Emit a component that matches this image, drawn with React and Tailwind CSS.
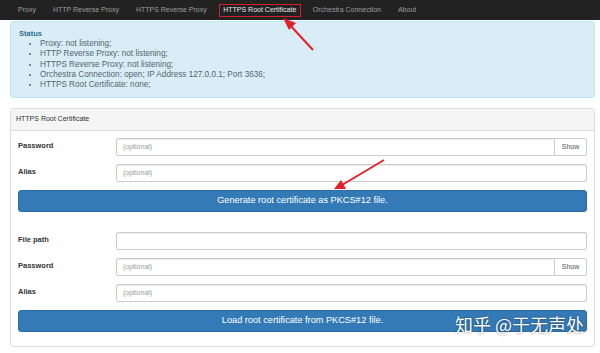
import React from "react";

const navItems = [
  "Proxy",
  "HTTP Reverse Proxy",
  "HTTPS Reverse Proxy",
  "HTTPS Root Certificate",
  "Orchestra Connection",
  "About",
];

const statusItems = [
  "Proxy: not listening;",
  "HTTP Reverse Proxy: not listening;",
  "HTTPS Reverse Proxy: not listening;",
  "Orchestra Connection: open; IP Address 127.0.0.1; Port 3636;",
  "HTTPS Root Certificate: none;",
];

function Field({ label, placeholder, show }) {
  return (
    <div className="flex items-start">
      <label className="w-[98px] pt-[2px] text-[7.5px] font-bold text-[#333]">
        {label}
      </label>
      <div className="flex flex-1 h-[18px]">
        <div
          className={`flex-1 flex items-center pl-[6px] border border-[#ccc] bg-white shadow-[inset_0_1px_1px_rgba(0,0,0,0.075)] text-[7px] text-[#999] ${
            show ? "rounded-l-[2px]" : "rounded-[2px]"
          }`}
        >
          {placeholder}
        </div>
        {show && (
          <div className="w-[32px] flex items-center justify-center border border-l-0 border-[#ccc] rounded-r-[2px] bg-white text-[7px] text-[#555]">
            Show
          </div>
        )}
      </div>
    </div>
  );
}

function BigButton({ children }) {
  return (
    <div className="h-[22px] flex items-center justify-center bg-[#337ab7] border border-[#2e6da4] rounded-[3px] text-white text-[9.2px]">
      {children}
    </div>
  );
}

export default function App() {
  return (
    <div
      className="relative w-[600px] h-[353px] bg-white overflow-hidden"
      style={{ fontFamily: '"Liberation Sans", Arial, sans-serif' }}
    >
      <nav className="h-[20px] bg-[#222] flex items-center pl-[18px] gap-[17px] text-[7px] text-[#9d9d9d]">
        {navItems.map((item) =>
          item === "HTTPS Root Certificate" ? (
            <span
              key={item}
              className="text-[#e6e6e6] border-[1.5px] border-[#d42028] px-[3.5px] -mx-[5px] h-[13px] flex items-center"
            >
              {item}
            </span>
          ) : (
            <span key={item}>{item}</span>
          )
        )}
      </nav>

      <div className="ml-[10px] mr-[5px] mt-px h-[77px] bg-[#d9edf7] border border-[#bce8f1] rounded-[3px] pl-[8px] pt-[7px] text-[#31708f]">
        <div className="text-[7.5px] font-bold leading-[10px]">Status</div>
        <ul className="pl-[21px] list-disc text-[8.2px] leading-[10.3px] text-[#55646c]">
          {statusItems.map((s) => (
            <li key={s}>{s}</li>
          ))}
        </ul>
      </div>

      <div className="ml-[10px] mr-[5px] mt-[10px] h-[239px] border border-[#ddd] rounded-[3px]">
        <div className="h-[22px] flex items-center pl-[5px] bg-[#f5f5f5] border-b border-[#ddd] text-[7px] text-[#333] rounded-t-[3px]">
          HTTPS Root Certificate
        </div>
        <div className="px-[7px] pt-[7px] flex flex-col gap-[8px]">
          <Field label="Password" placeholder="(optional)" show />
          <Field label="Alias" placeholder="(optional)" />
          <BigButton>Generate root certificate as PKCS#12 file.</BigButton>
          <div className="h-[4px]" />
          <Field label="File path" placeholder="" />
          <Field label="Password" placeholder="(optional)" show />
          <Field label="Alias" placeholder="(optional)" />
          <BigButton>Load root certificate from PKCS#12 file.</BigButton>
        </div>
      </div>

      <svg
        className="absolute inset-0 pointer-events-none"
        width="600"
        height="353"
        viewBox="0 0 600 353"
      >
        <line x1="313" y1="50" x2="289" y2="24" stroke="#e3202a" strokeWidth="2" />
        <polygon points="283,18 296,23 289,30" fill="#e3202a" />
        <line x1="384" y1="160" x2="342" y2="185" stroke="#e3202a" strokeWidth="2" />
        <polygon points="334,189 341,180 346,189" fill="#e3202a" />
      </svg>

      <div
        className="absolute left-[455px] top-[315px] text-[18px] text-white leading-none [text-shadow:0_0_2px_rgba(0,0,0,0.6)]"
        style={{ fontFamily: '"Noto Sans CJK SC", sans-serif' }}
      >
        知乎 @于无声处
      </div>
    </div>
  );
}
